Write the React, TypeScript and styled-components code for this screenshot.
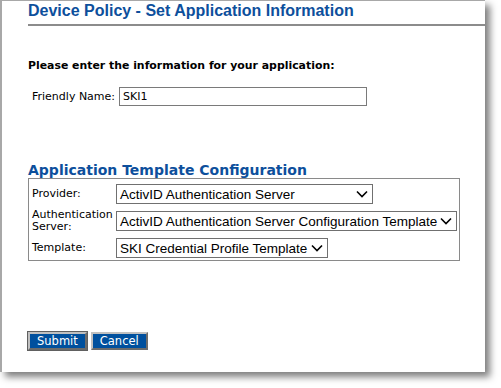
import styled, { createGlobalStyle } from 'styled-components';

const GlobalStyle = createGlobalStyle`
    html, body {
        margin: 0;
        padding: 0;
        background: #ffffff;
    }

    body {
        min-height: 388px;
    }
`;

const Frame = styled.div`
    box-sizing: border-box;
    width: 485px;
    height: 372px;
    background: #ffffff;
    border-left: 2px solid #a8a8a8;
    border-top: 1px solid #a8a8a8;
    box-shadow: 5px 5px 7px rgba(0, 0, 0, 0.5);
    padding: 0 0 0 26px;
    display: flex;
    flex-direction: column;
`;

const Header = styled.div`
    border-bottom: 2px solid #8c8c8c;
    height: 25px;
    box-sizing: border-box;
`;

const Title = styled.h1`
    margin: 0;
    font-family: 'Liberation Sans', Arial, sans-serif;
    font-size: 16px;
    font-weight: bold;
    line-height: 20px;
    color: #0d4f9c;
`;

const Intro = styled.p`
    margin: 33px 0 0 0;
    font-family: 'DejaVu Sans', Verdana, sans-serif;
    font-size: 10.9px;
    font-weight: bold;
    color: #000000;
`;

const NameRow = styled.div`
    display: flex;
    align-items: center;
    gap: 4px;
    margin: 15px 0 0 4px;
`;

const Label = styled.label`
    font-family: 'DejaVu Sans', Verdana, sans-serif;
    font-size: 11px;
    color: #000000;
`;

const TextInput = styled.input`
    box-sizing: border-box;
    width: 248px;
    height: 19px;
    border: 1px solid #7a7a7a;
    padding: 0 3px;
    font-family: 'DejaVu Sans', Verdana, sans-serif;
    font-size: 11px;
    color: #000000;
    outline: none;
`;

const SectionTitle = styled.h2`
    margin: 56px 0 0 0;
    font-family: 'DejaVu Sans', Verdana, sans-serif;
    font-size: 14px;
    font-weight: bold;
    line-height: 16px;
    color: #0d4f9c;
`;

const ConfigTable = styled.div`
    box-sizing: border-box;
    width: 432px;
    border: 1px solid #8a8a8a;
    padding: 5px 3px 2px 3px;
    display: grid;
    grid-template-columns: 84px auto;
    row-gap: 5px;
    align-items: center;
    justify-items: start;
`;

const CellLabel = styled.div`
    font-family: 'DejaVu Sans', Verdana, sans-serif;
    font-size: 11px;
    line-height: 12px;
    color: #000000;
`;

const SelectBox = styled.div<{ width: number }>`
    box-sizing: border-box;
    width: ${props => props.width}px;
    height: 20px;
    border: 1px solid #707070;
    background: #ffffff;
    display: flex;
    align-items: center;
    justify-content: space-between;
    padding: 0 4px 0 3px;
    font-family: 'Liberation Sans', Arial, sans-serif;
    font-size: 13.5px;
    color: #000000;
    white-space: nowrap;
`;

const Chevron = () => (
    <svg width="12" height="8" viewBox="0 0 12 8">
        <path d="M1 1.5 L6 6.5 L11 1.5" fill="none" stroke="#000" strokeWidth="1.6" />
    </svg>
);

const Buttons = styled.div`
    display: flex;
    gap: 4px;
    margin-top: auto;
    margin-bottom: 22px;
`;

const Button = styled.button<{ primary?: boolean }>`
    box-sizing: border-box;
    height: 18px;
    padding: 0 7px;
    background: #00509e;
    color: #ffffff;
    font-family: 'DejaVu Sans', Verdana, sans-serif;
    font-size: 11.5px;
    border: 2px outset #c0c0c0;
    outline: ${props => (props.primary ? '1px solid #606060' : 'none')};
    line-height: 12px;
`;

interface SelectProps {
    width: number;
    value: string;
}

function Select({ width, value }: SelectProps): JSX.Element {
    return (
        <SelectBox width={width}>
            <span>{value}</span>
            <Chevron />
        </SelectBox>
    );
}

export default function App(): JSX.Element {
    return (
        <>
            <GlobalStyle />
            <Frame>
                <Header>
                    <Title>Device Policy - Set Application Information</Title>
                </Header>
                <Intro>Please enter the information for your application:</Intro>
                <NameRow>
                    <Label>Friendly Name:</Label>
                    <TextInput defaultValue="SKI1" />
                </NameRow>
                <SectionTitle>Application Template Configuration</SectionTitle>
                <ConfigTable>
                    <CellLabel>Provider:</CellLabel>
                    <Select width={257} value="ActivID Authentication Server" />
                    <CellLabel>Authentication<br />Server:</CellLabel>
                    <Select width={341} value="ActivID Authentication Server Configuration Template" />
                    <CellLabel>Template:</CellLabel>
                    <Select width={212} value="SKI Credential Profile Template" />
                </ConfigTable>
                <Buttons>
                    <Button primary>Submit</Button>
                    <Button>Cancel</Button>
                </Buttons>
            </Frame>
        </>
    );
}
